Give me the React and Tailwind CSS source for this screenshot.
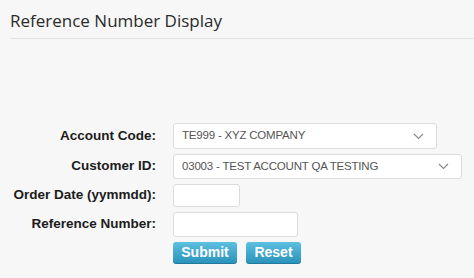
import React from "react";

function Chevron() {
  return (
    <svg width="11" height="7" viewBox="0 0 11 7" fill="none" className="shrink-0">
      <path d="M1 1l4.5 4.5L10 1" stroke="#8a8a8a" strokeWidth="1.2" />
    </svg>
  );
}

function Select({ value, width }) {
  return (
    <div
      className={`flex h-full items-center justify-between rounded-[3px] border border-[#dcdcdc] bg-white pl-[8px] pr-[12px] text-[11.5px] tracking-[-0.2px] text-[#555] ${width}`}
    >
      <span>{value}</span>
      <Chevron />
    </div>
  );
}

function Input({ width }) {
  return <div className={`h-full rounded-[3px] border border-[#dcdcdc] bg-white ${width}`} />;
}

export default function App() {
  const labelCls = "self-center text-right text-[13.5px] font-bold text-[#1c1c1c]";
  const btnCls =
    "h-full rounded-[3px] border-b border-[#22799c] bg-gradient-to-b from-[#5cc0e0] to-[#2a93bb] text-[14px] font-bold text-white";
  return (
    <div className="h-[278px] w-[474px] overflow-hidden bg-[#f7f7f7] font-['Liberation_Sans',Arial,sans-serif]">
      <div className="pl-[10px] pt-[9px]">
        <h1 className="h-[29px] font-['Open_Sans',sans-serif] text-[17px] leading-[24px] text-[#2b2b2b]">
          Reference Number Display
        </h1>
        <div className="h-px bg-[#e3e3e3]" />
      </div>
      <div className="grid grid-cols-[146px_auto] grid-rows-[26px_25px_23px_25px_22px] gap-x-[17px] gap-y-[5px] pt-[84px] pl-[10px]">
        <div className={labelCls}>Account Code:</div>
        <Select value="TE999 - XYZ COMPANY" width="w-[264px]" />
        <div className={labelCls}>Customer ID:</div>
        <Select value="03003 - TEST ACCOUNT QA TESTING" width="w-[289px]" />
        <div className={labelCls}>Order Date (yymmdd):</div>
        <Input width="w-[67px]" />
        <div className={labelCls}>Reference Number:</div>
        <Input width="w-[125px]" />
        <div />
        <div className="flex h-full gap-[9px]">
          <button className={`${btnCls} w-[64px]`}>Submit</button>
          <button className={`${btnCls} w-[55px]`}>Reset</button>
        </div>
      </div>
    </div>
  );
}
